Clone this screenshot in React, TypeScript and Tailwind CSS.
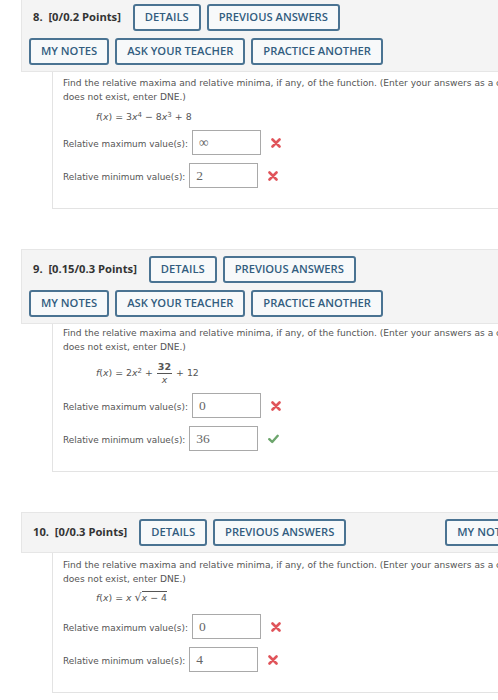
type Row = {
  label: string;
  value: string;
  correct: boolean;
};

type Question = {
  num: string;
  points: string;
  oneRow: boolean;
  bodyTop: string;
  formulaTop: string;
  rowsTop: string;
  formula: React.ReactNode;
  rows: Row[];
};

function Btn({ children }: { children: React.ReactNode }) {
  return (
    <div className="flex h-[27px] shrink-0 items-center whitespace-nowrap rounded-[3px] border-2 border-[#4a7392] bg-[#f7f9fa] px-[10px] font-['Open_Sans',sans-serif] text-[11.2px] font-semibold text-[#325d7f]">
      {children}
    </div>
  );
}

function Cross() {
  return (
    <svg width="10" height="10" viewBox="0 0 10 10" className="shrink-0">
      <path d="M1.5 1.5 L8.5 8.5 M8.5 1.5 L1.5 8.5" stroke="#e0545a" strokeWidth="2.6" strokeLinecap="round" />
    </svg>
  );
}

function Check() {
  return (
    <svg width="11" height="10" viewBox="0 0 11 10" className="shrink-0">
      <path d="M1.3 5.2 L4.2 8 L9.7 1.8" stroke="#6ca56c" strokeWidth="2.4" fill="none" strokeLinecap="round" strokeLinejoin="round" />
    </svg>
  );
}

const F = () => <i>f</i>;
const X = () => <i>x</i>;

const maxLabel = "Relative maximum value(s):";
const minLabel = "Relative minimum value(s):";

const questions: Question[] = [
  {
    num: "8.",
    points: "[0/0.2 Points]",
    oneRow: false,
    bodyTop: "pt-[4px]",
    formulaTop: "mt-[6px]",
    rowsTop: "mt-[6px]",
    formula: (
      <div className="h-[14px] whitespace-nowrap text-[9.4px]">
        <F />(<X />) = 3<X />
        <sup className="text-[7px]">4</sup> − 8<X />
        <sup className="text-[7px]">3</sup> + 8
      </div>
    ),
    rows: [
      { label: maxLabel, value: "∞", correct: false },
      { label: minLabel, value: "2", correct: false },
    ],
  },
  {
    num: "9.",
    points: "[0.15/0.3 Points]",
    oneRow: false,
    bodyTop: "pt-[2px]",
    formulaTop: "mt-[4px]",
    rowsTop: "mt-[5px]",
    formula: (
      <div className="flex h-[30px] items-center whitespace-pre text-[9.4px]">
        <span>
          <F />(<X />) = 2<X />
          <sup className="text-[7px]">2</sup> +{" "}
        </span>
        <span className="mx-[1px] inline-flex flex-col items-center leading-[12px]">
          <span className="border-b border-[#555] px-[1px] text-[9.5px] font-bold">32</span>
          <span>
            <X />
          </span>
        </span>
        <span> + 12</span>
      </div>
    ),
    rows: [
      { label: maxLabel, value: "0", correct: false },
      { label: minLabel, value: "36", correct: true },
    ],
  },
  {
    num: "10.",
    points: "[0/0.3 Points]",
    oneRow: true,
    bodyTop: "pt-[5px]",
    formulaTop: "mt-[5px]",
    rowsTop: "mt-[8px]",
    formula: (
      <div className="h-[15px] whitespace-nowrap text-[9.4px]">
        <F />(<X />) = <X />{" "}
        <span className="text-[11px]">√</span>
        <span className="border-t border-[#555]">
          <X /> − 4
        </span>
      </div>
    ),
    rows: [
      { label: maxLabel, value: "0", correct: false },
      { label: minLabel, value: "4", correct: false },
    ],
  },
];

function QuestionBlock({ q, first }: { q: Question; first: boolean }) {
  return (
    <div className={first ? "-mt-[3px]" : "mt-[40px]"}>
      <div className="ml-[21px] w-[600px] border border-[#e6e6e6] bg-[#f4f4f4] px-[7px] py-[6px]">
        <div className="flex items-center">
          <span className="ml-[4px] mr-[12px] whitespace-nowrap font-['Open_Sans',sans-serif] text-[11.2px] font-bold text-[#333]">
            {q.num}&nbsp; {q.points}
          </span>
          <Btn>DETAILS</Btn>
          <div className="ml-[6px]">
            <Btn>PREVIOUS ANSWERS</Btn>
          </div>
          {q.oneRow && (
            <div className="ml-[99px] flex gap-[6px]">
              <Btn>MY NOTES</Btn>
              <Btn>ASK YOUR TEACHER</Btn>
            </div>
          )}
        </div>
        {!q.oneRow && (
          <div className="mt-[7px] flex gap-[6px]">
            <Btn>MY NOTES</Btn>
            <Btn>ASK YOUR TEACHER</Btn>
            <Btn>PRACTICE ANOTHER</Btn>
          </div>
        )}
      </div>
      <div
        className={`ml-[52px] w-[600px] border-b border-l border-[#e3e3e3] pl-[10px] ${q.bodyTop} pb-[20px] text-[9.1px] leading-[14px] text-[#555]`}
      >
        <div className="whitespace-nowrap">
          Find the relative maxima and relative minima, if any, of the function. (Enter your answers as a comma-separated list. If an answer
        </div>
        <div>does not exist, enter DNE.)</div>
        <div className={`${q.formulaTop} pl-[33px]`}>{q.formula}</div>
        <div className={`${q.rowsTop} flex flex-col gap-[8px]`}>
          {q.rows.map((r) => (
            <div key={r.label} className="flex items-baseline">
              <span className="whitespace-nowrap text-[8.9px]">{r.label}</span>
              <div className="ml-[4px] flex h-[25px] w-[69px] items-center border border-[#a9a9a9] bg-white pl-[6px] font-['Liberation_Serif',serif] text-[13.5px] text-[#666]">
                {r.value}
              </div>
              <div className="ml-[10px] self-center">{r.correct ? <Check /> : <Cross />}</div>
            </div>
          ))}
        </div>
      </div>
    </div>
  );
}

export default function App() {
  return (
    <div className="h-[700px] w-[498px] overflow-hidden bg-white font-['DejaVu_Sans',sans-serif]">
      {questions.map((q, i) => (
        <QuestionBlock key={q.num} q={q} first={i === 0} />
      ))}
    </div>
  );
}
